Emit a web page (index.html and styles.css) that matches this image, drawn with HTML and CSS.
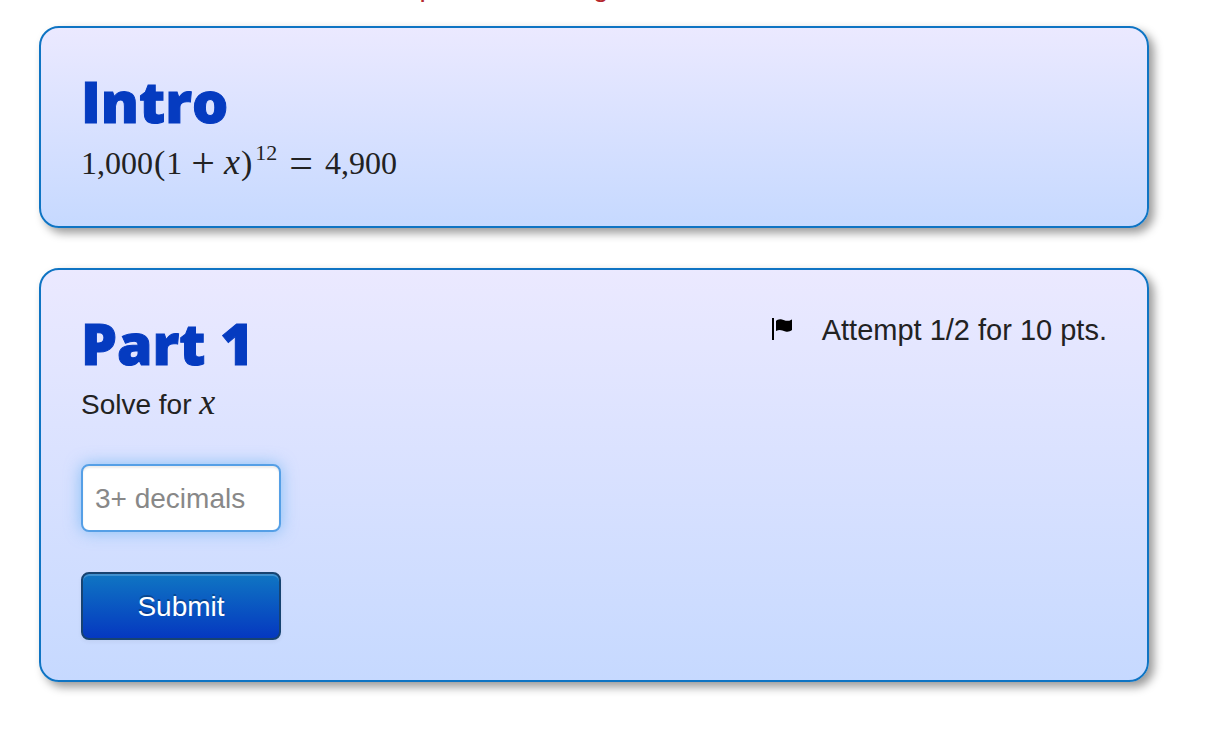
FILE: index.html
```html
<!doctype html>
<html lang="en">
<head>
    <meta charset="UTF-8">
    <meta name="viewport" content="width=device-width, initial-scale=1.0">
    <title>Problem</title>
    <link rel="stylesheet" href="styles.css">
</head>
<body>
<div class="notice"><span>p</span><span>g</span></div>
<section class="box">
    <h2>Intro</h2>
    <p class="math">1,000<span class="paren">(</span>1<span class="op">+</span><i>x</i><span class="paren">)</span><sup>12</sup><span class="op rel">=</span>4,900</p>
</section>
<section class="box">
    <form>
        <div class="head">
            <h2>Part 1</h2>
            <div class="attempt">
                <svg class="flag" viewBox="0 0 22 22" width="22" height="22" aria-hidden="true">
                    <rect x="0" y="0" width="2" height="22"/>
                    <path d="M4 3 C5 1.6 7 .9 9 1.2 C12 1.6 13 3 16 2.8 C18 2.7 19 1.6 20 1.4 V12 C18 13.4 16 14 13.5 13.4 C10 12.5 8 11 4 13 Z"/>
                </svg>
                <span>Attempt 1/2 for 10 pts.</span>
            </div>
        </div>
        <label for="answer">Solve for <i>x</i></label>
        <input type="text" id="answer" placeholder="3+ decimals">
        <button type="button">Submit</button>
    </form>
</section>
</body>
</html>
```

FILE: styles.css
```css
* {
    margin: 0;
    padding: 0;
    box-sizing: border-box;
}

body {
    padding: 0 57px 0 39px;
    background: #fff;
    color: #222;
    font: 28px/40px "Liberation Sans", Arial, sans-serif;
}

.notice {
    display: flex;
    justify-content: center;
    align-items: flex-end;
    gap: 158px;
    height: 2px;
    margin-bottom: 24px;
    padding-right: 160px;
    overflow: hidden;
    color: #b5282e;
    line-height: 30px;
}

.box {
    margin-bottom: 40px;
    padding: 40px;
    border: 2px solid #0f74c3;
    border-radius: 20px;
    background: linear-gradient(#ebe9ff, #c6d9ff);
    box-shadow: 5px 5px 10px rgba(0, 0, 0, .4);
}

h2 {
    padding-bottom: 4px;
    color: #053bc0;
    font: 800 57px/66px "Open Sans", "Arial Black", sans-serif;
    -webkit-text-stroke: 1px #053bc0;
}

.math {
    height: 48px;
    font: 32px/50px "Liberation Serif", "Times New Roman", serif;
    white-space: nowrap;
}

i {
    font-family: "Liberation Serif", "Times New Roman", serif;
    font-size: 36px;
    line-height: 1;
}

.math .op {
    margin: 0 9px;
    font-size: 42px;
    line-height: 1;
    vertical-align: -3px;
}

.math .rel {
    margin: 0 12px;
}

.math .paren {
    margin: 0 1px;
    font-size: 34px;
    line-height: 1;
}

.math .paren + sup {
    margin-left: 2px;
}

.math sup {
    font-size: 22px;
    line-height: 1;
    vertical-align: 14px;
}

.head {
    display: flex;
    justify-content: space-between;
    align-items: flex-start;
}

.attempt {
    display: flex;
    gap: 28px;
    font-size: 29px;
    line-height: 40px;
}

.flag {
    margin-top: 8px;
}

label {
    display: block;
    height: 44px;
    line-height: 50px;
}

input,
button {
    display: block;
    width: 200px;
    height: 68px;
    margin-top: 40px;
    border-radius: 8px;
    font: inherit;
}

input {
    padding: 2px 12px 0;
    border: 2px solid #559fe6;
    background: #fff;
    box-shadow: inset 0 2px 2px rgba(0, 0, 0, .08), 0 0 16px rgba(82, 168, 236, .6);
    color: #555;
    outline: none;
}

input::placeholder {
    color: #888;
}

button {
    padding-top: 2px;
    border: 2px solid #174371;
    background: linear-gradient(#0f76c3, #0538c0);
    box-shadow: inset 0 2px 0 rgba(255, 255, 255, .2), 0 2px 4px rgba(0, 0, 0, .05);
    color: #fff;
    text-shadow: 0 -2px 0 rgba(0, 0, 0, .25);
}
```
